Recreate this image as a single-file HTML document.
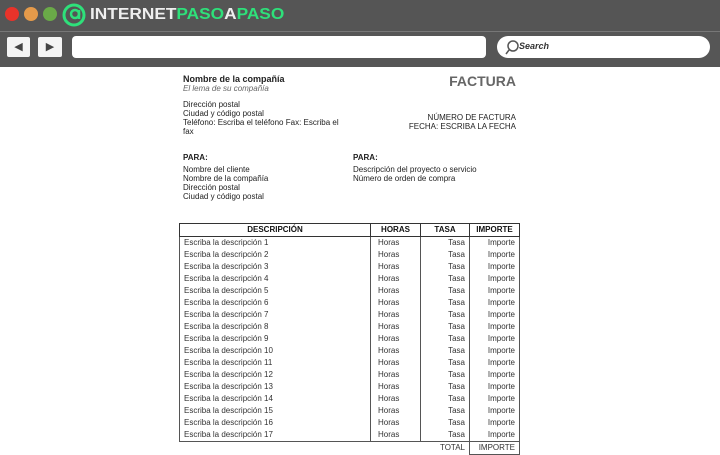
<!DOCTYPE html><html><head><meta charset="utf-8"><style>
body{margin:0;width:720px;height:450px;overflow:hidden;background:#fff;font-family:"Liberation Sans",Arial,sans-serif;position:relative}
.a{position:absolute;white-space:nowrap}
.t{font-size:8px;color:#222}
table{position:absolute;left:179px;top:223px;border-collapse:collapse;font-size:8px;color:#333;table-layout:fixed;width:340px}
td{height:12px;padding:0 4px;border-left:1px solid #555;border-right:1px solid #555;line-height:12px;overflow:hidden;white-space:nowrap}
td:nth-child(2){padding-left:7px}
th{height:12px;padding:0;border:1px solid #333;font-size:8px;color:#111;line-height:12px}
</style></head><body>
<div class="a" style="left:0;top:0;width:720px;height:31px;background:#555"></div>
<div class="a" style="left:0;top:31px;width:720px;height:35px;background:#565656;border-top:1px solid #777"></div>
<div class="a" style="left:5px;top:7px;width:14px;height:14px;border-radius:50%;background:#e8332a"></div>
<div class="a" style="left:24px;top:7px;width:14px;height:14px;border-radius:50%;background:#e59a4a"></div>
<div class="a" style="left:43px;top:7px;width:14px;height:14px;border-radius:50%;background:#6aaa48"></div>
<svg class="a" style="left:61px;top:2px" width="26" height="26" viewBox="0 0 26 26"><circle cx="13" cy="13" r="10" fill="none" stroke="#2ee07a" stroke-width="3"/><circle cx="14" cy="12" r="4" fill="none" stroke="#2ee07a" stroke-width="2.5"/><path d="M18 8v9" stroke="#2ee07a" stroke-width="2.5"/></svg>
<div class="a" style="left:90px;top:6px;font-size:16px;font-weight:bold;color:#eee;transform:scaleX(1.08);transform-origin:left">INTERNET<span style="color:#2ee07a">PASO</span>A<span style="color:#2ee07a">PASO</span></div>
<div class="a" style="left:7px;top:37px;width:23px;height:20px;background:#f4f4f4;border-radius:2px;text-align:center;font-size:11px;line-height:20px;color:#444">◀</div>
<div class="a" style="left:38px;top:37px;width:24px;height:20px;background:#f4f4f4;border-radius:2px;text-align:center;font-size:11px;line-height:20px;color:#444">▶</div>
<div class="a" style="left:72px;top:36px;width:414px;height:22px;background:#fff;border-radius:4px"></div>
<div class="a" style="left:497px;top:36px;width:213px;height:22px;background:#fff;border-radius:11px"></div>
<svg class="a" style="left:504px;top:39px" width="16" height="16"><circle cx="9" cy="7" r="5" fill="none" stroke="#555" stroke-width="1.5"/><path d="M5 11l-3 4" stroke="#555" stroke-width="1.5"/></svg>
<div class="a" style="left:519px;top:41px;font-size:9px;font-style:italic;font-weight:bold;color:#333">Search</div>

<div class="a t" style="left:183px;top:74px;font-weight:bold;font-size:9px">Nombre de la compañía</div>
<div class="a t" style="left:183px;top:84px;font-style:italic;color:#666">El lema de su compañía</div>
<div class="a" style="left:420px;top:73px;font-size:14px;font-weight:bold;color:#666;width:96px;text-align:right">FACTURA</div>
<div class="a t" style="left:183px;top:100px;line-height:9px">Dirección postal<br>Ciudad y código postal<br>Teléfono: Escriba el teléfono Fax: Escriba el<br>fax</div>
<div class="a t" style="left:380px;top:113px;width:136px;text-align:right;line-height:9px">NÚMERO DE FACTURA<br>FECHA: ESCRIBA LA FECHA</div>
<div class="a t" style="left:183px;top:153px;font-weight:bold">PARA:</div>
<div class="a t" style="left:353px;top:153px;font-weight:bold">PARA:</div>
<div class="a t" style="left:183px;top:165px;line-height:9px">Nombre del cliente<br>Nombre de la compañía<br>Dirección postal<br>Ciudad y código postal</div>
<div class="a t" style="left:353px;top:165px;line-height:9px">Descripción del proyecto o servicio<br>Número de orden de compra</div>

<table>
<colgroup><col style="width:191px"><col style="width:50px"><col style="width:49px"><col style="width:50px"></colgroup>
<tr><th>DESCRIPCIÓN</th><th>HORAS</th><th>TASA</th><th>IMPORTE</th></tr>
<tr><td>Escriba la descripción 1</td><td>Horas</td><td style="text-align:right">Tasa</td><td style="text-align:right">Importe</td></tr>
<tr><td>Escriba la descripción 2</td><td>Horas</td><td style="text-align:right">Tasa</td><td style="text-align:right">Importe</td></tr>
<tr><td>Escriba la descripción 3</td><td>Horas</td><td style="text-align:right">Tasa</td><td style="text-align:right">Importe</td></tr>
<tr><td>Escriba la descripción 4</td><td>Horas</td><td style="text-align:right">Tasa</td><td style="text-align:right">Importe</td></tr>
<tr><td>Escriba la descripción 5</td><td>Horas</td><td style="text-align:right">Tasa</td><td style="text-align:right">Importe</td></tr>
<tr><td>Escriba la descripción 6</td><td>Horas</td><td style="text-align:right">Tasa</td><td style="text-align:right">Importe</td></tr>
<tr><td>Escriba la descripción 7</td><td>Horas</td><td style="text-align:right">Tasa</td><td style="text-align:right">Importe</td></tr>
<tr><td>Escriba la descripción 8</td><td>Horas</td><td style="text-align:right">Tasa</td><td style="text-align:right">Importe</td></tr>
<tr><td>Escriba la descripción 9</td><td>Horas</td><td style="text-align:right">Tasa</td><td style="text-align:right">Importe</td></tr>
<tr><td>Escriba la descripción 10</td><td>Horas</td><td style="text-align:right">Tasa</td><td style="text-align:right">Importe</td></tr>
<tr><td>Escriba la descripción 11</td><td>Horas</td><td style="text-align:right">Tasa</td><td style="text-align:right">Importe</td></tr>
<tr><td>Escriba la descripción 12</td><td>Horas</td><td style="text-align:right">Tasa</td><td style="text-align:right">Importe</td></tr>
<tr><td>Escriba la descripción 13</td><td>Horas</td><td style="text-align:right">Tasa</td><td style="text-align:right">Importe</td></tr>
<tr><td>Escriba la descripción 14</td><td>Horas</td><td style="text-align:right">Tasa</td><td style="text-align:right">Importe</td></tr>
<tr><td>Escriba la descripción 15</td><td>Horas</td><td style="text-align:right">Tasa</td><td style="text-align:right">Importe</td></tr>
<tr><td>Escriba la descripción 16</td><td>Horas</td><td style="text-align:right">Tasa</td><td style="text-align:right">Importe</td></tr>
<tr><td style="border-bottom:1px solid #555">Escriba la descripción 17</td><td style="border-bottom:1px solid #555">Horas</td><td style="text-align:right;border-bottom:1px solid #555">Tasa</td><td style="text-align:right;border-bottom:1px solid #555">Importe</td></tr>
<tr><td style="border:none"></td><td style="border:none"></td><td style="border:none;text-align:right">TOTAL</td><td style="text-align:right;border:1px solid #555">IMPORTE</td></tr>
</table>
</body></html>
